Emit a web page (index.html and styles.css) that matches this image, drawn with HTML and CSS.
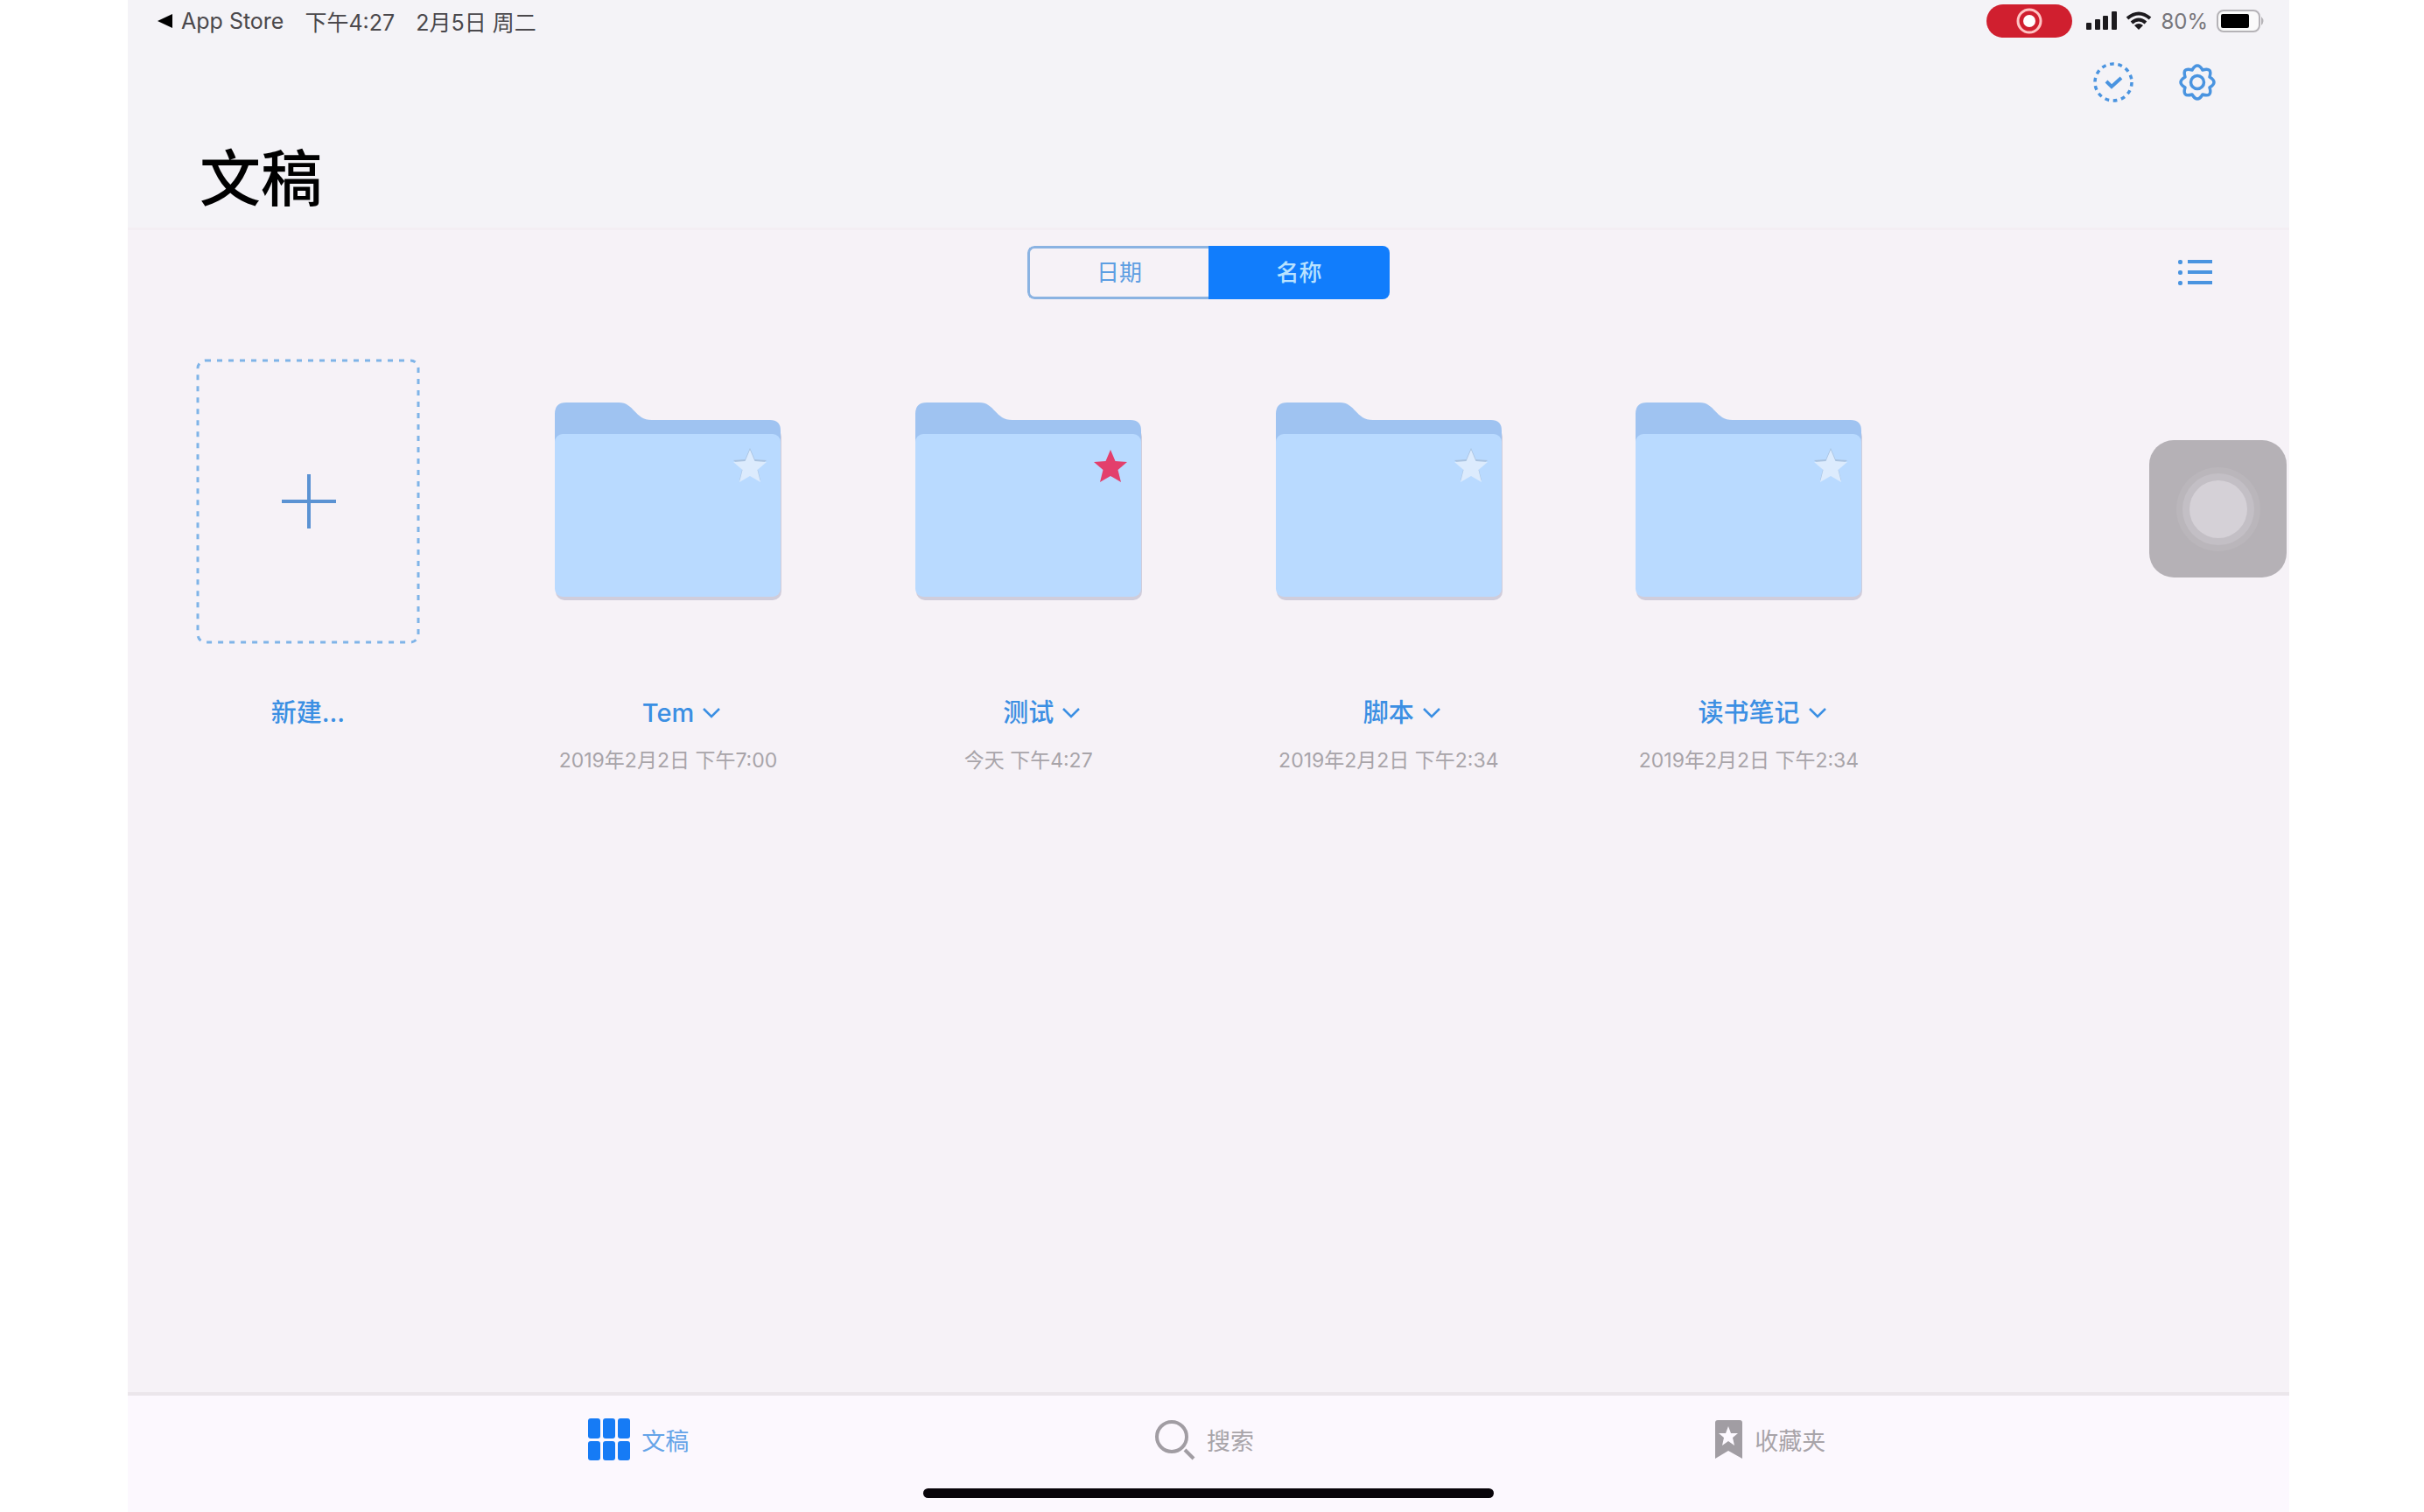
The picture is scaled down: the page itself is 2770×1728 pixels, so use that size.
FILE: index.html
```html
<!DOCTYPE html>
<html lang="zh-CN">
<head>
  <meta charset="UTF-8" />
  <meta name="viewport" content="width=device-width, initial-scale=1.0"/>
  <title>文稿</title>
  <link rel="stylesheet" href="styles.css">
</head>
<body>

  <!-- Shared shapes -->
  <svg class="defs" aria-hidden="true">
    <symbol id="folder" viewBox="0 0 260 232">
      <rect class="folder-shadow" x="2" y="32" width="258" height="197" rx="10"/>
      <path class="folder-back" d="M1 62V16Q1 3 14 3H74C92 3 92 23 112 23H247Q259 23 259 35V62Z"/>
      <rect class="folder-front" x="1" y="39" width="258" height="186" rx="9"/>
    </symbol>
    <symbol id="star" viewBox="0 0 40 40">
      <path d="M20 1L25.5 14L39 15L28.5 24L32 38L20 31L8 38L11.5 24L1 15L14.5 14Z"/>
    </symbol>
    <symbol id="chevron" viewBox="0 0 22 14">
      <path d="M2 2L11 11L20 2" fill="none" stroke="currentColor" stroke-width="2.5"/>
    </symbol>
  </svg>

  <div class="app">
    <header class="top">
      <div class="status">
        <a class="back" href="#">
          <svg width="17" height="16" viewBox="0 0 17 16"><path d="M0 8L17 0V16Z" fill="#000"/></svg>
          App Store
        </a>
        <span>下午4:27</span>
        <span>2月5日 周二</span>
        <div class="status-right">
          <span class="record">
            <svg width="32" height="32" viewBox="0 0 32 32"><circle cx="16" cy="16" r="13" fill="none" stroke="#ffc4c4" stroke-width="3"/><circle cx="16" cy="16" r="7" fill="#fff"/></svg>
          </span>
          <svg width="35" height="22" viewBox="0 0 35 22" fill="#1c1a1e"><rect x="0" y="13" width="6" height="8" rx="1"/><rect x="10" y="9" width="6" height="12" rx="1"/><rect x="19" y="5" width="6" height="16" rx="1"/><rect x="29" y="0" width="6" height="21" rx="1"/></svg>
          <svg width="30" height="22" viewBox="0 0 30 22" fill="none" stroke="#1c1a1e" stroke-width="4"><path d="M2 8Q15 -3 28 8"/><path d="M7 13Q15 6 23 13"/><path d="M15 21L10 16Q15 12 20 16Z" fill="#1c1a1e" stroke="none"/></svg>
          <span class="percent">80%</span>
          <svg width="56" height="26" viewBox="0 0 56 26"><rect x="1" y="1" width="48" height="24" rx="7" fill="#fafafa" stroke="#b5b3b7" stroke-width="2"/><rect x="5" y="5" width="32" height="16" rx="2" fill="#000"/><path d="M51 8Q56 13 51 18Z" fill="#b5b3b7"/></svg>
        </div>
      </div>

      <div class="actions">
        <button class="icon-btn" aria-label="选择">
          <svg width="48" height="48" viewBox="0 0 48 48" fill="none" stroke="currentColor"><circle cx="24" cy="24" r="21" stroke-width="3.5" stroke-dasharray="4.8 4.63"/><path d="M16 23L22 29L33 19" stroke-width="4"/></svg>
        </button>
        <button class="icon-btn" aria-label="设置">
          <svg width="48" height="48" viewBox="0 0 48 48" fill="none" stroke="currentColor" stroke-width="3.5" stroke-linejoin="round"><path d="M18 10Q24 0 30 10Q41.5 6.5 38 18Q48 24 38 30Q41.5 41.5 30 38Q24 48 18 38Q6.5 41.5 10 30Q0 24 10 18Q6.5 6.5 18 10Z"/><circle cx="24" cy="24" r="7.5"/></svg>
        </button>
      </div>

      <h1>文稿</h1>
    </header>

    <main>
      <div class="toolbar">
        <div class="segmented">
          <button>日期</button>
          <button class="active">名称</button>
        </div>
        <button class="icon-btn list-btn" aria-label="列表">
          <svg width="40" height="32" viewBox="0 0 40 32" fill="currentColor"><rect x="0" y="1" width="5" height="5" rx="2"/><rect x="0" y="13" width="5" height="5" rx="2"/><rect x="0" y="25" width="5" height="5" rx="2"/><rect x="11" y="1" width="28" height="4"/><rect x="11" y="13" width="28" height="4"/><rect x="11" y="25" width="28" height="4"/></svg>
        </button>
      </div>

      <div class="grid">
        <div class="item">
          <button class="thumb" aria-label="新建">
            <svg width="258" height="328" viewBox="0 0 258 328" fill="none"><rect x="3" y="3" width="252" height="322" rx="9" stroke="#7fb4e8" stroke-width="3" stroke-dasharray="6 7"/><path d="M99 164H161M130 133V195" stroke="#5b93d3" stroke-width="4"/></svg>
          </button>
          <button class="name"><span>新建...</span></button>
        </div>

        <div class="item">
          <div class="thumb">
            <svg class="folder"><use href="#folder"/></svg>
            <button class="star" aria-label="收藏"><svg><use href="#star"/></svg></button>
          </div>
          <button class="name"><span>Tem</span><svg><use href="#chevron"/></svg></button>
          <p class="date">2019年2月2日 下午7:00</p>
        </div>

        <div class="item">
          <div class="thumb">
            <svg class="folder"><use href="#folder"/></svg>
            <button class="star starred" aria-label="取消收藏"><svg><use href="#star"/></svg></button>
          </div>
          <button class="name"><span>测试</span><svg><use href="#chevron"/></svg></button>
          <p class="date">今天 下午4:27</p>
        </div>

        <div class="item">
          <div class="thumb">
            <svg class="folder"><use href="#folder"/></svg>
            <button class="star" aria-label="收藏"><svg><use href="#star"/></svg></button>
          </div>
          <button class="name"><span>脚本</span><svg><use href="#chevron"/></svg></button>
          <p class="date">2019年2月2日 下午2:34</p>
        </div>

        <div class="item">
          <div class="thumb">
            <svg class="folder"><use href="#folder"/></svg>
            <button class="star" aria-label="收藏"><svg><use href="#star"/></svg></button>
          </div>
          <button class="name"><span>读书笔记</span><svg><use href="#chevron"/></svg></button>
          <p class="date">2019年2月2日 下午2:34</p>
        </div>
      </div>
    </main>

    <footer>
      <nav>
        <a class="active" href="#">
          <svg width="50" height="50" viewBox="0 0 50 50" fill="#167bf5"><rect x="1" y="1" width="14" height="23" rx="3"/><rect x="18" y="1" width="14" height="23" rx="3"/><rect x="35" y="1" width="14" height="23" rx="3"/><rect x="1" y="27" width="14" height="22" rx="3"/><rect x="18" y="27" width="14" height="22" rx="3"/><rect x="35" y="27" width="14" height="22" rx="3"/></svg>
          文稿
        </a>
        <a href="#">
          <svg width="48" height="48" viewBox="0 0 48 48" fill="none" stroke="#a19da3" stroke-width="4"><circle cx="20" cy="21" r="17"/><path d="M35 36L45 46"/></svg>
          搜索
        </a>
        <a href="#">
          <svg width="34" height="46" viewBox="0 0 34 46"><path d="M1 4Q1 1 4 1H29Q32 1 32 4V45L16 36L1 45Z" fill="#a19da3"/><path d="M16 8L19 16L27 16L21 21L23 30L16 25L9 30L11 21L5 16L13 16Z" fill="#fdf9ff"/></svg>
          收藏夹
        </a>
      </nav>
      <div class="home-bar"></div>
    </footer>
  </div>

  <button class="assistive" aria-label="辅助触控"><span></span></button>

</body>
</html>
```
FILE: styles.css
```css
:root {
  --header: #f4f3f7;
  --bg: #f6f2f7;
  --bar: #fcf8fe;
  --accent: #4a94e0;
  --blue: #117dfc;
  --muted: #a8a4a9;
}

* {
  margin: 0;
  padding: 0;
  box-sizing: border-box;
  font-family: Inter, "Noto Sans CJK SC", sans-serif;
}

body {
  background: #fff;
  padding: 0 154px 0 146px;
}

button {
  background: none;
  border: none;
  color: inherit;
  cursor: pointer;
}

a {
  color: inherit;
  text-decoration: none;
}

svg {
  display: block;
  flex-shrink: 0;
}

.defs {
  display: none;
}

.app {
  min-height: 100vh;
  display: flex;
  flex-direction: column;
  background: var(--bg);
}

/* Header */
.top {
  background: var(--header);
  border-bottom: 3px solid #f3eef3;
}

.status {
  display: flex;
  align-items: center;
  gap: 24px;
  height: 48px;
  padding: 0 27px 0 34px;
  font-size: 25px;
  color: #4a484c;
}

.back {
  display: flex;
  align-items: center;
  gap: 10px;
}

.status-right {
  display: flex;
  align-items: center;
  gap: 10px;
  margin-left: auto;
  font-size: 24px;
}

.record {
  display: flex;
  justify-content: center;
  align-items: center;
  width: 98px;
  height: 38px;
  margin-right: 6px;
  border-radius: 19px;
  background: #d01f2f;
}

.percent {
  color: #77757a;
}

.actions {
  display: flex;
  justify-content: flex-end;
  gap: 48px;
  padding: 22px 81px 0;
}

.icon-btn {
  color: var(--accent);
}

h1 {
  padding: 38px 82px 6px;
  font-size: 70px;
  line-height: 98px;
  font-weight: 500;
  color: #000;
}

/* Sort control */
main {
  flex: 1;
}

.toolbar {
  display: grid;
  grid-template-columns: 1fr auto 1fr;
  align-items: center;
  padding: 18px 87px 0;
}

.segmented {
  grid-column: 2;
  display: grid;
  grid-template-columns: 1fr 1fr;
  width: 414px;
  height: 61px;
  border-radius: 8px;
  overflow: hidden;
}

.segmented button {
  border: 3px solid #8ab3e2;
  border-right: none;
  border-radius: 8px 0 0 8px;
  font-size: 26px;
  line-height: 36px;
  color: #5d9ee2;
}

.segmented .active {
  border: none;
  border-radius: 0;
  background: var(--blue);
  color: #b9e2ff;
  font-weight: 500;
}

.list-btn {
  justify-self: end;
}

/* Documents */
.grid {
  display: grid;
  grid-template-columns: repeat(6, 1fr);
  padding-top: 67px;
}

.item {
  display: flex;
  flex-direction: column;
  align-items: center;
}

.thumb {
  position: relative;
  display: flex;
  align-items: center;
  height: 328px;
}

.folder {
  width: 260px;
  height: 232px;
}

.folder-shadow {
  fill: #d0cddb;
}

.folder-back {
  fill: #9fc3f1;
}

.folder-front {
  fill: #b9daff;
}

.star {
  position: absolute;
  top: 104px;
  right: 16px;
}

.star svg {
  width: 40px;
  height: 40px;
  fill: #dcebfd;
  filter: drop-shadow(0 -2px 0 #a9c2df);
}

.starred svg {
  fill: #e33f6c;
  filter: none;
}

.name {
  display: grid;
  grid-template-columns: 1fr auto 1fr;
  align-items: center;
  column-gap: 9px;
  margin-top: 57px;
  font-size: 29px;
  line-height: 42px;
  font-weight: 500;
  color: #3b8fe3;
}

.name span {
  grid-column: 2;
}

.name svg {
  width: 22px;
  height: 14px;
}

.date {
  margin-top: 17px;
  font-size: 23px;
  line-height: 32px;
  color: var(--muted);
}

/* Tab bar */
footer {
  background: var(--bar);
  border-top: 4px solid #ebe6eb;
}

nav {
  display: grid;
  grid-template-columns: repeat(3, 1fr);
  padding: 23px 270px 0 260px;
}

nav a {
  display: flex;
  justify-content: center;
  align-items: center;
  gap: 12px;
  height: 54px;
  font-size: 27px;
  color: var(--muted);
}

nav .active {
  color: #65a4e8;
}

.home-bar {
  width: 652px;
  height: 11px;
  margin: 29px auto 16px;
  border-radius: 6px;
  background: #08040a;
}

/* Floating button */
.assistive {
  position: fixed;
  top: 503px;
  right: 157px;
  display: flex;
  justify-content: center;
  align-items: center;
  width: 157px;
  height: 157px;
  border-radius: 28px;
  background: #b5b1b6;
}

.assistive span {
  width: 66px;
  height: 66px;
  border-radius: 50%;
  background: #d5d1d7;
  box-shadow: 0 0 0 8px #c3bfc5, 0 0 0 15px #bab6bb;
}
```
